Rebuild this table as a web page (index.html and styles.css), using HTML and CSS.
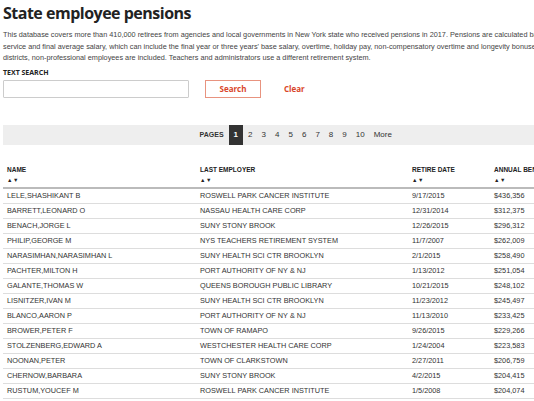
FILE: index.html
```html
<!DOCTYPE html>
<html>
<head>
<meta charset="utf-8">
<link rel="stylesheet" href="styles.css">
</head>
<body>
<div class="page">
  <h1 class="title">State employee pensions</h1>
  <p class="intro">This database covers more than 410,000 retirees from agencies and local governments in New York state who received pensions in 2017. Pensions are calculated based on years of service and final average salary, which can include the final year or three years' base salary, overtime, holiday pay, non-compensatory overtime and longevity bonuses. For school districts, non-professional employees are included. Teachers and administrators use a different retirement system.</p>
  <div class="search">
    <label class="search-label">TEXT SEARCH</label>
    <div class="search-row">
      <input class="search-input" type="text">
      <button class="btn-search">Search</button>
      <button class="btn-clear">Clear</button>
    </div>
  </div>
  <div class="pager">
    <span class="pager-label">PAGES</span>
    <span class="pg active">1</span>
    <span class="pg">2</span>
    <span class="pg">3</span>
    <span class="pg">4</span>
    <span class="pg">5</span>
    <span class="pg">6</span>
    <span class="pg">7</span>
    <span class="pg">8</span>
    <span class="pg">9</span>
    <span class="pg">10</span>
    <span class="pg">More</span>
  </div>
  <table class="data">
    <colgroup>
      <col class="c-name"><col class="c-emp"><col class="c-date"><col class="c-amt">
    </colgroup>
    <thead>
      <tr>
        <th><div>NAME</div><div class="sort">▲▼</div></th>
        <th><div>LAST EMPLOYER</div><div class="sort">▲▼</div></th>
        <th><div>RETIRE DATE</div><div class="sort">▲▼</div></th>
        <th><div>ANNUAL BENEFIT</div><div class="sort">▲▼</div></th>
      </tr>
    </thead>
    <tbody>
      <tr><td>LELE,SHASHIKANT B</td><td>ROSWELL PARK CANCER INSTITUTE</td><td>9/17/2015</td><td>$436,356</td></tr>
      <tr><td>BARRETT,LEONARD O</td><td>NASSAU HEALTH CARE CORP</td><td>12/31/2014</td><td>$312,375</td></tr>
      <tr><td>BENACH,JORGE L</td><td>SUNY STONY BROOK</td><td>12/26/2015</td><td>$296,312</td></tr>
      <tr><td>PHILIP,GEORGE M</td><td>NYS TEACHERS RETIREMENT SYSTEM</td><td>11/7/2007</td><td>$262,009</td></tr>
      <tr><td>NARASIMHAN,NARASIMHAN L</td><td>SUNY HEALTH SCI CTR BROOKLYN</td><td>2/1/2015</td><td>$258,490</td></tr>
      <tr><td>PACHTER,MILTON H</td><td>PORT AUTHORITY OF NY &amp; NJ</td><td>1/13/2012</td><td>$251,054</td></tr>
      <tr><td>GALANTE,THOMAS W</td><td>QUEENS BOROUGH PUBLIC LIBRARY</td><td>10/21/2015</td><td>$248,102</td></tr>
      <tr><td>LISNITZER,IVAN M</td><td>SUNY HEALTH SCI CTR BROOKLYN</td><td>11/23/2012</td><td>$245,497</td></tr>
      <tr><td>BLANCO,AARON P</td><td>PORT AUTHORITY OF NY &amp; NJ</td><td>11/13/2010</td><td>$233,425</td></tr>
      <tr><td>BROWER,PETER F</td><td>TOWN OF RAMAPO</td><td>9/26/2015</td><td>$229,266</td></tr>
      <tr><td>STOLZENBERG,EDWARD A</td><td>WESTCHESTER HEALTH CARE CORP</td><td>1/24/2004</td><td>$223,583</td></tr>
      <tr><td>NOONAN,PETER</td><td>TOWN OF CLARKSTOWN</td><td>2/27/2011</td><td>$206,759</td></tr>
      <tr><td>CHERNOW,BARBARA</td><td>SUNY STONY BROOK</td><td>4/2/2015</td><td>$204,415</td></tr>
      <tr><td>RUSTUM,YOUCEF M</td><td>ROSWELL PARK CANCER INSTITUTE</td><td>1/5/2008</td><td>$204,074</td></tr>
    </tbody>
  </table>
</div>
</body>
</html>
```

FILE: styles.css
```css
html { overflow: hidden; }
body {
  margin: 0;
  padding: 0 3px;
  background: #fff;
  font-family: "Liberation Sans", Arial, sans-serif;
  color: #333;
}
.page {
  width: 590px;
}
.title {
  font-family: "Open Sans", "Liberation Sans", sans-serif;
  font-weight: 700;
  font-size: 16px;
  line-height: 20px;
  margin: 3px 0 0;
  color: #222;
  letter-spacing: -0.5px;
}
.intro {
  font-size: 7.3px;
  line-height: 11.5px;
  color: #444;
  margin: 6px 0 0;
}
.search {
  margin-top: 4px;
}
.search-label {
  display: block;
  font-family: "Open Sans", "Liberation Sans", sans-serif;
  font-weight: 700;
  font-size: 7px;
  line-height: 10px;
  color: #222;
}
.search-row {
  display: flex;
  align-items: center;
  margin-top: 2px;
}
.search-input {
  width: 186px;
  height: 18px;
  box-sizing: border-box;
  border: 1px solid #ccc;
  border-radius: 1px;
  margin: 0;
  padding: 0;
}
.btn-search {
  margin-left: 16px;
  width: 56px;
  height: 18px;
  box-sizing: border-box;
  border: 1px solid #e8937f;
  background: #fff;
  color: #d9452a;
  font-family: "Open Sans", "Liberation Sans", sans-serif;
  font-weight: 700;
  font-size: 8px;
  padding: 0;
}
.btn-clear {
  margin-left: 23px;
  border: 0;
  background: none;
  padding: 0;
  color: #d9452a;
  font-family: "Open Sans", "Liberation Sans", sans-serif;
  font-weight: 700;
  font-size: 8px;
}
.pager {
  margin-top: 27px;
  height: 20px;
  background: #eee;
  display: flex;
  justify-content: center;
  align-items: center;
  font-size: 8px;
  color: #333;
}
.pager-label {
  font-weight: 700;
  font-size: 7px;
  margin-right: 5px;
}
.pg {
  display: flex;
  align-items: center;
  height: 20px;
  padding: 0 4.5px;
}
.pg.active {
  background: #333;
  color: #fff;
  width: 14px;
  padding: 0;
  justify-content: center;
  font-weight: 700;
  margin-right: 1px;
}
.data {
  margin-top: 16px;
  width: 600px;
  border-collapse: collapse;
  table-layout: fixed;
  font-size: 7.3px;
}
.c-name { width: 193px; }
.c-emp { width: 212px; }
.c-date { width: 82px; }
.c-amt { width: 113px; }
.data th {
  text-align: left;
  font-weight: 700;
  font-size: 6.5px;
  color: #222;
  padding: 4px 4px 1px;
  border-bottom: 2px solid #bbb;
  line-height: 10px;
}
.sort {
  font-size: 5.5px;
  letter-spacing: 0.5px;
  line-height: 11px;
}
.data td {
  padding: 2px 4px;
  line-height: 10px;
  border-bottom: 1px solid #ddd;
  white-space: nowrap;
}
```
